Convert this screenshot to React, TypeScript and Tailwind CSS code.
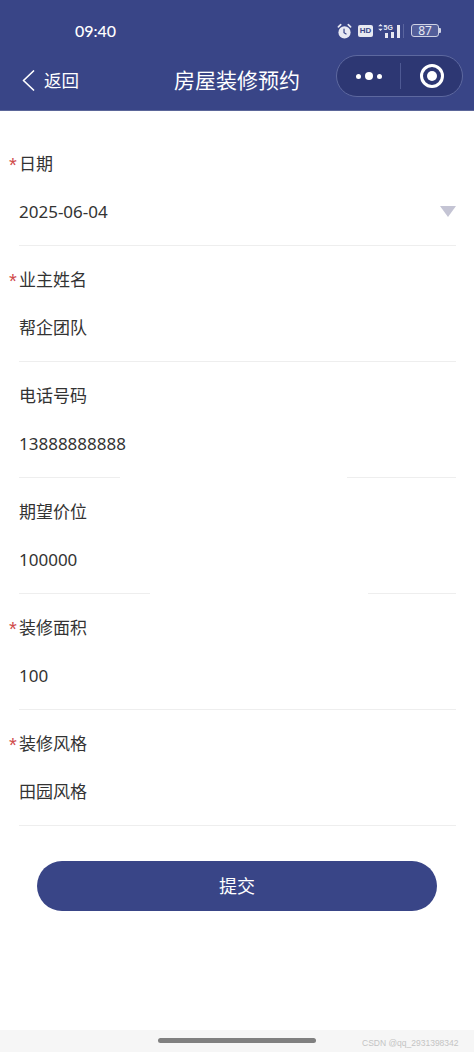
const font = "font-['Noto_Sans','Noto_Sans_CJK_SC',sans-serif]";

function StatusIcons() {
  return (
    <div className="flex items-center text-white">
      <svg width="15" height="16" viewBox="0 0 16 17" fill="none">
        <circle cx="8" cy="10" r="6.500" fill="#e8e9f2" />
        <path d="M7.500 6.500v3.800l2.200 1.300" stroke="#394587" strokeWidth="1.300" strokeLinecap="round" />
        <path d="M1.500 4.200 4 1.800M14.500 4.200 12 1.800" stroke="#e8e9f2" strokeWidth="1.800" strokeLinecap="round" />
      </svg>
      <span className="ml-[6px] flex h-[12px] w-[15px] items-center justify-center rounded-[2px] bg-[#e8e9f2] font-['Liberation_Sans',sans-serif] text-[8px] font-bold leading-none text-[#394587]">
        HD
      </span>
      <svg width="24" height="17" viewBox="0 0 24 17" fill="#e8e9f2" className="ml-[5px]">
        <path d="M2.500 2 4.800 4.300H0.200ZM2.500 9 0.200 6.700H4.800Z" />
        <text x="5.500" y="8" fontSize="7" fontWeight="700" fontFamily="Liberation Sans, sans-serif">5G</text>
        <rect x="7" y="11" width="3" height="5" />
        <rect x="13" y="10" width="3" height="6" />
        <rect x="19" y="3" width="3" height="13" />
      </svg>
      <span className="ml-[1px] h-[14px] w-[1px] bg-[#5a659e]" />
      <span className="relative ml-[7px] flex h-[13px] w-[28px] items-center justify-center rounded-[3px] border border-[#cfd2e4] bg-[#535e9a] text-[12px] leading-none text-[#e8e9f2]">
        87
        <span className="absolute -right-[3px] top-[3px] h-[5px] w-[2px] rounded-r-[1px] bg-[#cfd2e4]" />
      </span>
    </div>
  );
}

function Capsule() {
  return (
    <div className="mb-[12px] flex h-[42px] w-[127px] items-center rounded-full border border-[#5d689f] bg-[#2d3773]">
      <div className="flex w-[63px] items-center justify-center gap-[4px]">
        <span className="h-[5px] w-[5px] rounded-full bg-white" />
        <span className="h-[8px] w-[8px] rounded-full bg-white" />
        <span className="h-[5px] w-[5px] rounded-full bg-white" />
      </div>
      <span className="h-[26px] w-[1px] bg-[#4e5993]" />
      <div className="flex flex-1 items-center justify-center">
        <span className="flex h-[24px] w-[24px] items-center justify-center rounded-full border-[3px] border-white">
          <span className="h-[10px] w-[10px] rounded-full bg-white" />
        </span>
      </div>
    </div>
  );
}

function Header() {
  return (
    <header className="h-[111px] border-b border-[#5b6699] bg-[#394587] text-white">
      <div className="flex h-[54px] items-center justify-between pl-[75px] pr-[35px] pt-[7px]">
        <span className="font-['Lato',sans-serif] text-[16px] font-medium leading-none">09:40</span>
        <StatusIcons />
      </div>
      <div className="grid h-[56px] grid-cols-[1fr_auto_1fr] items-center pl-[11px] pr-[11px]">
        <div className="mb-[3px] ml-[11px] flex items-center">
          <svg width="13" height="21" viewBox="0 0 13 21" fill="none">
            <path d="M11.500 1 1.500 10.500l10 9.500" stroke="white" strokeWidth="1.700" strokeLinecap="round" strokeLinejoin="round" />
          </svg>
          <span className="ml-[9px] text-[17.5px] leading-none">返回</span>
        </div>
        <h1 className="mb-[3px] text-center text-[21px] font-normal leading-none">房屋装修预约</h1>
        <div className="flex justify-end">
          <Capsule />
        </div>
      </div>
    </header>
  );
}

function Divider({ gap }: { gap?: "a" | "b" }) {
  // two of the lines are broken by the white patch in the middle of the shot
  if (gap === "a") {
    return (
      <div className="flex h-[1px]">
        <div className="w-[101px] bg-[#eeeeee]" />
        <div className="w-[227px]" />
        <div className="flex-1 bg-[#eeeeee]" />
      </div>
    );
  }
  if (gap === "b") {
    return (
      <div className="flex h-[1px]">
        <div className="w-[131px] bg-[#eeeeee]" />
        <div className="w-[218px]" />
        <div className="flex-1 bg-[#eeeeee]" />
      </div>
    );
  }
  return <div className="h-[1px] bg-[#eeeeee]" />;
}

function Field({
  label,
  value,
  required,
  select,
  gap,
}: {
  label: string;
  value: string;
  required?: boolean;
  select?: boolean;
  gap?: "a" | "b";
}) {
  return (
    <div>
      <div className="relative mt-[20px] flex h-[28px] items-center text-[17px] text-[#333333]">
        {required ? (
          <span className="absolute -left-[10px] top-[4px] font-['Liberation_Sans',sans-serif] text-[20px] leading-[22px] text-[#cf4a4a]">*</span>
        ) : null}
        {label}
      </div>
      <div className="flex h-[67px] items-center justify-between text-[17px] text-[#333333]">
        <span>{value}</span>
        {select ? (
          <svg width="16" height="11" viewBox="0 0 16 11">
            <path d="M0 0h16L8 11Z" fill="#c4c4d4" />
          </svg>
        ) : null}
      </div>
      <Divider gap={gap} />
    </div>
  );
}

export default function App() {
  return (
    <div className={`flex h-[1052px] w-[474px] flex-col overflow-hidden bg-white ${font}`}>
      <Header />
      <main className="flex-1 pl-[19px] pr-[18px] pt-[19px]">
        <Field label="日期" value="2025-06-04" required select />
        <Field label="业主姓名" value="帮企团队" required />
        <Field label="电话号码" value="13888888888" gap="a" />
        <Field label="期望价位" value="100000" gap="b" />
        <Field label="装修面积" value="100" required />
        <Field label="装修风格" value="田园风格" required />
        <button className="ml-[18px] mt-[35px] flex h-[50px] w-[400px] items-center justify-center rounded-full bg-[#394587] text-[18px] text-white">
          提交
        </button>
      </main>
      <footer className="relative flex h-[22px] justify-center bg-[#f6f6f6] pt-[8px]">
        <span className="h-[5px] w-[158px] rounded-full bg-[#808080]" />
        <span className="absolute left-[362px] top-[7px] whitespace-nowrap font-['Liberation_Sans',sans-serif] text-[8.500px] leading-[12px] text-[#c4c4c4]">
          CSDN @qq_2931398342
        </span>
      </footer>
    </div>
  );
}
